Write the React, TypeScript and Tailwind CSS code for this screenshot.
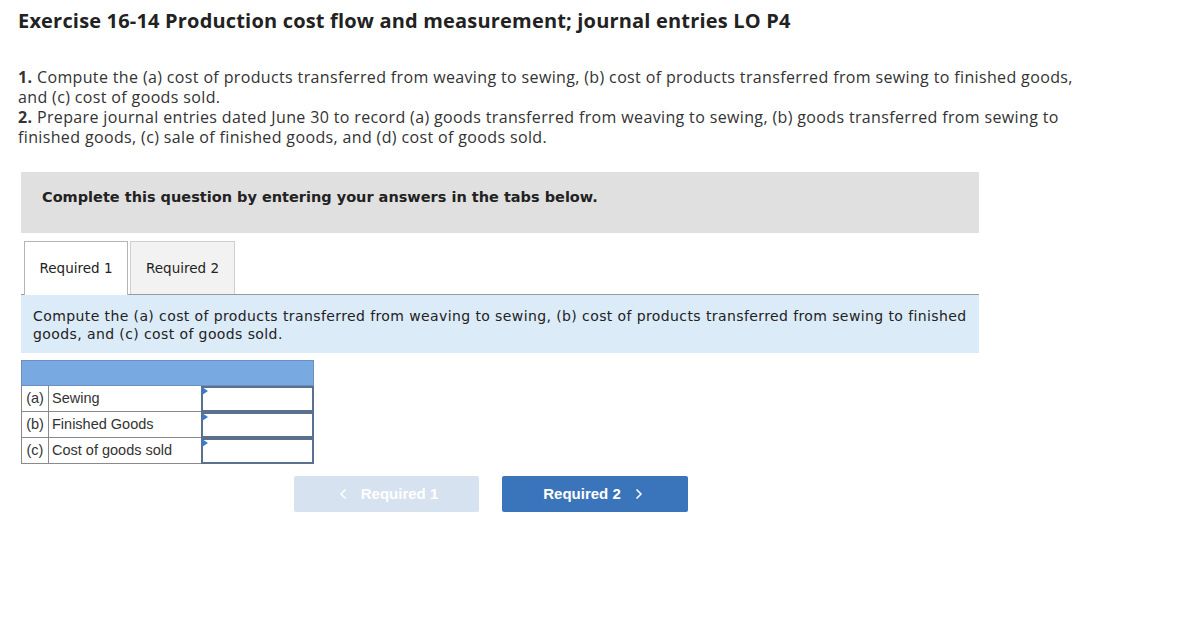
import { ChevronLeft, ChevronRight } from 'lucide-react';

const rows = [
    { key: '(a)', label: 'Sewing' },
    { key: '(b)', label: 'Finished Goods' },
    { key: '(c)', label: 'Cost of goods sold' },
];

export default function App() {
    return (
        <div className="min-h-screen bg-white text-[#333] pt-[9px]">
            {/* Header */}
            <h1 className="px-[18px] text-[20px] leading-[24px] font-bold tracking-[0.18px] text-[#222] font-['Open_Sans',sans-serif]">
                Exercise 16-14 Production cost flow and measurement; journal entries LO P4
            </h1>

            <div className="px-[18px] mt-[34px] text-[16px] leading-[20px] tracking-[0.36px] text-[#333] font-['Open_Sans',sans-serif] whitespace-nowrap">
                <p>
                    <b>1.</b> Compute the (a) cost of products transferred from weaving to sewing, (b) cost of products transferred from sewing to finished goods,
                    <br />
                    and (c) cost of goods sold.
                </p>
                <p>
                    <b>2.</b> Prepare journal entries dated June 30 to record (a) goods transferred from weaving to sewing, (b) goods transferred from sewing to
                    <br />
                    finished goods, (c) sale of finished goods, and (d) cost of goods sold.
                </p>
            </div>

            {/* Question card */}
            <div className="ml-[21px] w-[958px] mt-[25px]">
                <div className="h-[61px] bg-[#e0e0e0] px-[21px] pt-[16px] leading-[18px] font-['DejaVu_Sans',sans-serif] text-[14.5px] font-bold text-[#222]">
                    Complete this question by entering your answers in the tabs below.
                </div>

                {/* Tabs */}
                <div className="mt-[8px] flex items-end gap-[2px] pl-[3px] border-b border-[#9a9a9a] font-['DejaVu_Sans',sans-serif] text-[13.5px] text-[#222]">
                    <div className="w-[104px] h-[54px] bg-white border border-b-0 border-[#b5b5b5] -mb-px flex items-center justify-center">
                        Required 1
                    </div>
                    <div className="w-[105px] h-[53px] bg-[#f2f2f2] border border-b-0 border-[#cfcfcf] flex items-center justify-center">
                        Required 2
                    </div>
                </div>

                <div className="bg-[#dcebf8] pl-[12px] pr-[2px] pt-[12px] pb-[10px] font-['DejaVu_Sans',sans-serif] text-[14px] tracking-[0.4px] leading-[18px] text-[#222]">
                    Compute the (a) cost of products transferred from weaving to sewing, (b) cost of products transferred from sewing to finished goods, and (c) cost of goods sold.
                </div>

                {/* Answer table */}
                <div className="mt-[7px] w-[293px] font-['Liberation_Sans',Arial,sans-serif] text-[14.5px] text-[#333]">
                    <div className="h-[26px] bg-[#78a9e1] border border-[#6c8fbd]" />
                    {rows.map((r) => (
                        <div key={r.key} className="flex h-[26px]">
                            <div className="w-[27px] border-l border-b border-[#8a8a8a] flex items-center justify-center">{r.key}</div>
                            <div className="w-[153px] border-l border-b border-[#8a8a8a] flex items-center pl-[3px]">{r.label}</div>
                            <div className="relative w-[113px] border-2 border-[#5b6f8e] bg-white">
                                <svg className="absolute -left-[1px] -top-[1px]" width="6" height="8" viewBox="0 0 6 8">
                                    <polygon points="0,0 6,4 0,8" fill="#3b7ac4" />
                                </svg>
                            </div>
                        </div>
                    ))}
                </div>

                {/* Navigation */}
                <div className="mt-[12px] ml-[273px] flex gap-[23px] font-['Liberation_Sans',Arial,sans-serif] text-[15px] font-bold">
                    <button className="w-[185px] h-[36px] rounded-[2px] bg-[#d6e2f0] text-white flex items-center justify-center gap-[10px]">
                        <ChevronLeft size={16} strokeWidth={2.5} />
                        Required 1
                    </button>
                    <button className="w-[186px] h-[36px] rounded-[2px] bg-[#3a74ba] text-white flex items-center justify-center gap-[10px]">
                        Required 2
                        <ChevronRight size={16} strokeWidth={2.5} />
                    </button>
                </div>
            </div>
        </div>
    );
}
